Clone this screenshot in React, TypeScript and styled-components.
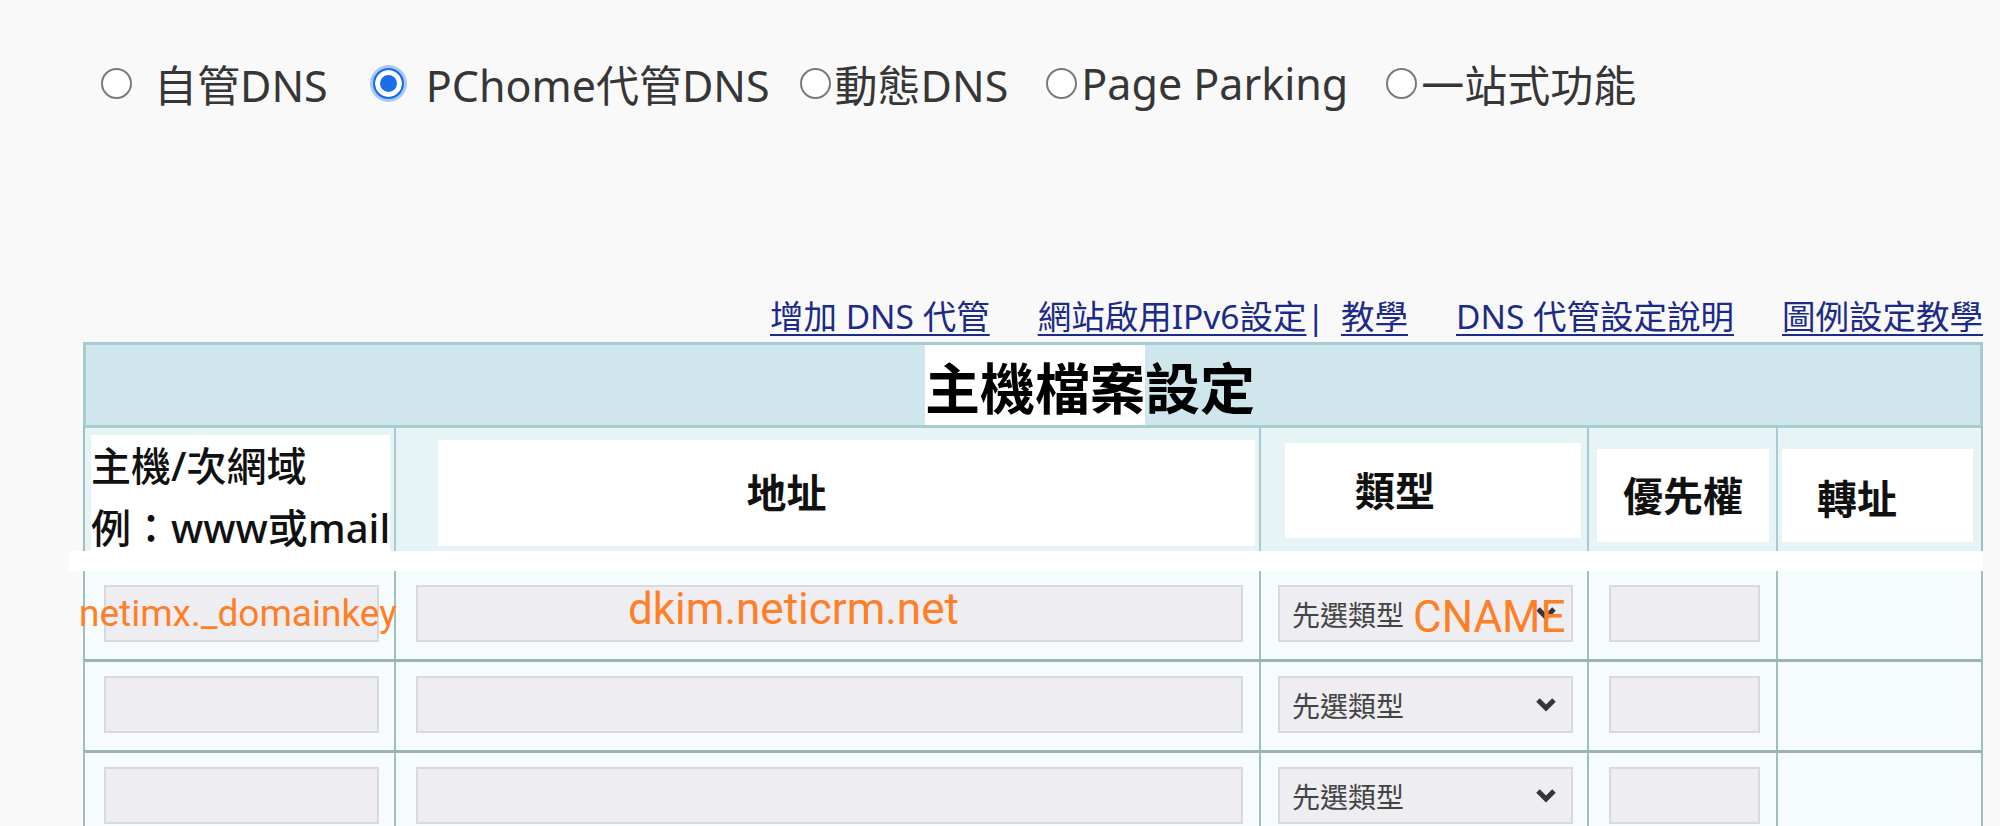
import React from 'react'
import styled, { createGlobalStyle, css } from 'styled-components'

const GlobalStyle = createGlobalStyle`
    html, body {
        margin: 0;
        padding: 0;
        overflow: hidden;
        background: #f9f9fa;
    }
    * {
        box-sizing: border-box;
    }
`

const SANS = `"Noto Sans", "Noto Sans CJK TC", sans-serif`

const radios = [
    { label: '自管DNS', checked: false, spaced: true, after: 41 },
    { label: 'PChome代管DNS', checked: true, spaced: true, after: 30 },
    { label: '動態DNS', checked: false, spaced: false, after: 38 },
    { label: 'Page Parking', checked: false, spaced: false, after: 38 },
    { label: '一站式功能', checked: false, spaced: false, after: 0 },
]

const columns = [
    { key: 'host', width: '309px' },
    { key: 'addr', width: '865px' },
    { key: 'type', width: '328px' },
    { key: 'prio', width: '189px' },
    { key: 'redir', width: '1fr' },
]

const gridTemplate = columns.map((c) => c.width).join(' ')

const ChevronIcon = () => (
    <svg width="22" height="15" viewBox="0 0 22 15">
        <polyline points="3,3 11,11 19,3" fill="none" stroke="#363636" strokeWidth="5" strokeLinejoin="miter" />
    </svg>
)

const BodyRow = ({ first }: { first?: boolean }) => (
    <Row template={gridTemplate} first={first}>
        <BodyCell pad="14px 15px 0 19px"><Field /></BodyCell>
        <BodyCell pad="14px 16px 0 20px"><Field /></BodyCell>
        <BodyCell pad="14px 14px 0 17px">
            <SelectBox>
                <span>先選類型</span>
                <ChevronIcon />
            </SelectBox>
        </BodyCell>
        <BodyCell pad="14px 16px 0 20px"><Field /></BodyCell>
        <BodyCell pad="0" />
    </Row>
)

export default function App() {
    return (
        <Page>
            <GlobalStyle />
            <RadioRow>
                {radios.map((r) => (
                    <RadioItem key={r.label} spaced={r.spaced} after={r.after}>
                        <RadioDot checked={r.checked} />
                        <span>{r.label}</span>
                    </RadioItem>
                ))}
            </RadioRow>

            <LinksRow>
                <LinkGroup><Link>增加 DNS 代管</Link></LinkGroup>
                <LinkGroup tight>
                    <span><Link>網站啟用IPv6設定</Link>|</span>
                    <Link>教學</Link>
                </LinkGroup>
                <LinkGroup><Link>DNS 代管設定說明</Link></LinkGroup>
                <LinkGroup><Link>圖例設定教學</Link></LinkGroup>
            </LinksRow>

            <Table>
                <TitleBar>
                    <Title>
                        <Highlight>主機檔案</Highlight>設定
                    </Title>
                </TitleBar>
                <Row template={gridTemplate} head>
                    <HeadCell pad="7px 9px 0 6px">
                        <HeadBox align="left" lines>
                            <span>主機/次網域</span>
                            <span>例：www或mail</span>
                        </HeadBox>
                    </HeadCell>
                    <HeadCell pad="12px 4px 5px 42px">
                        <HeadBox shift="120px">地址</HeadBox>
                    </HeadCell>
                    <HeadCell pad="15px 6px 13px 24px">
                        <HeadBox shift="76px">類型</HeadBox>
                    </HeadCell>
                    <HeadCell pad="21px 7px 9px 8px">
                        <HeadBox>優先權</HeadBox>
                    </HeadCell>
                    <HeadCell pad="21px 8px 9px 4px">
                        <HeadBox align="left" indent="35px" drop="6px">轉址</HeadBox>
                    </HeadCell>
                </Row>
                <Band />
                <BodyRow first />
                <BodyRow />
                <BodyRow />
            </Table>

            <Note left={79} top={592} size={37}>netimx._domainkey</Note>
            <Note left={628} top={583} size={44}>dkim.neticrm.net</Note>
            <Note left={1413} top={591} size={44}>CNAME</Note>
        </Page>
    )
}

const Page = styled.div`
    position: relative;
    height: 826px;
    padding: 53px 17px 0 83px;
    background: #f9f9fa;
    font-family: ${SANS};
    color: #333;
`
const RadioRow = styled.div`
    display: flex;
    align-items: center;
    height: 60px;
    padding-left: 18px;
    font-size: 43px;
    color: #363636;
`
const RadioItem = styled.label<{ spaced?: boolean; after: number }>`
    display: flex;
    align-items: center;
    gap: ${({ spaced }) => (spaced ? '22px' : '4px')};
    margin-right: ${({ after }) => after}px;
    white-space: nowrap;
`
const RadioDot = styled.span<{ checked?: boolean }>`
    flex: none;
    width: 31px;
    height: 31px;
    border-radius: 50%;
    border: 2px solid #7a7a7a;
    background: #fff;
    ${({ checked }) => checked && css`
        border-color: #1a6fe8;
        background: #1a6fe8;
        box-shadow: inset 0 0 0 5px #fff, 0 0 0 3px #a9c8f5;
        margin-left: 4px;
    `}
`
const LinksRow = styled.div`
    display: flex;
    justify-content: flex-end;
    align-items: center;
    gap: 48px;
    height: 40px;
    margin-top: 181px;
    margin-bottom: 8px;
    font-size: 33.5px;
    color: #1c2a88;
`
const LinkGroup = styled.div<{ tight?: boolean }>`
    display: flex;
    align-items: center;
    gap: ${({ tight }) => (tight ? '16px' : '0')};
    white-space: nowrap;
`
const Link = styled.a`
    color: #1c2a88;
    text-decoration: underline;
    text-underline-offset: 5px;
    text-decoration-thickness: 2px;
    cursor: pointer;
`
const Table = styled.div`
    width: 1900px;
`
const TitleBar = styled.div`
    display: flex;
    justify-content: center;
    align-items: center;
    height: 83px;
    padding-left: 114px;
    background: #cfe6ec;
    border: 3px solid #a8cbd1;
    border-bottom: none;
`
const Title = styled.h2`
    margin: 0;
    font-family: "Noto Sans CJK TC", sans-serif;
    font-size: 55px;
    font-weight: 700;
    line-height: 69px;
    color: #000;
`
const Highlight = styled.span`
    background: #fff;
`
const Row = styled.div<{ template: string; head?: boolean; first?: boolean }>`
    display: grid;
    grid-template-columns: ${({ template }) => template};
    border-top: ${({ head, first }) => (first ? 'none' : `3px solid ${head ? '#a8cbd1' : '#9cb3b3'}`)};
    border-left: 2px solid #9fbfbf;
    border-right: 2px solid #9fbfbf;
    background: ${({ head }) => (head ? '#e6f4f6' : '#f6fbfb')};
`
const HeadCell = styled.div<{ pad: string }>`
    display: flex;
    height: 123px;
    padding: ${({ pad }) => pad};
    & + & {
        border-left: 2px solid #a7cbd0;
    }
`
const HeadBox = styled.div<{ align?: 'left' | 'center'; lines?: boolean; shift?: string; indent?: string; drop?: string }>`
    flex: 1;
    display: flex;
    flex-direction: ${({ lines }) => (lines ? 'column' : 'row')};
    justify-content: ${({ align, lines }) => (lines ? 'flex-start' : align === 'left' ? 'flex-start' : 'center')};
    align-items: ${({ lines }) => (lines ? 'flex-start' : 'center')};
    padding-left: ${({ indent }) => indent || '0'};
    padding-right: ${({ shift }) => shift || '0'};
    padding-top: ${({ drop }) => drop || '0'};
    background: #fff;
    font-family: "Noto Sans", "Noto Sans CJK TC", sans-serif;
    font-size: 40px;
    font-weight: ${({ lines }) => (lines ? 500 : 700)};
    line-height: 62px;
    color: #111;
    white-space: nowrap;
    span {
        display: block;
    }
`
const Band = styled.div`
    height: 20px;
    margin-left: -14px;
    background: #fff;
`
const BodyCell = styled.div<{ pad: string }>`
    height: 88px;
    padding: ${({ pad }) => pad};
    & + & {
        border-left: 2px solid #9fbfbf;
    }
`
const Field = styled.div`
    height: 57px;
    background: #ededf2;
    border: 2px solid #d9d8de;
`
const SelectBox = styled.div`
    display: flex;
    align-items: center;
    justify-content: space-between;
    height: 57px;
    padding: 0 14px 0 12px;
    background: #ededf2;
    border: 2px solid #d9d8de;
    font-family: "Noto Sans CJK TC", sans-serif;
    font-size: 28px;
    color: #444;
`
const Note = styled.span<{ left: number; top: number; size: number }>`
    position: absolute;
    left: ${({ left }) => left}px;
    top: ${({ top }) => top}px;
    font-family: Roboto, "Noto Sans", sans-serif;
    font-size: ${({ size }) => size}px;
    line-height: 1.2;
    color: #ff7f27;
    white-space: nowrap;
`
